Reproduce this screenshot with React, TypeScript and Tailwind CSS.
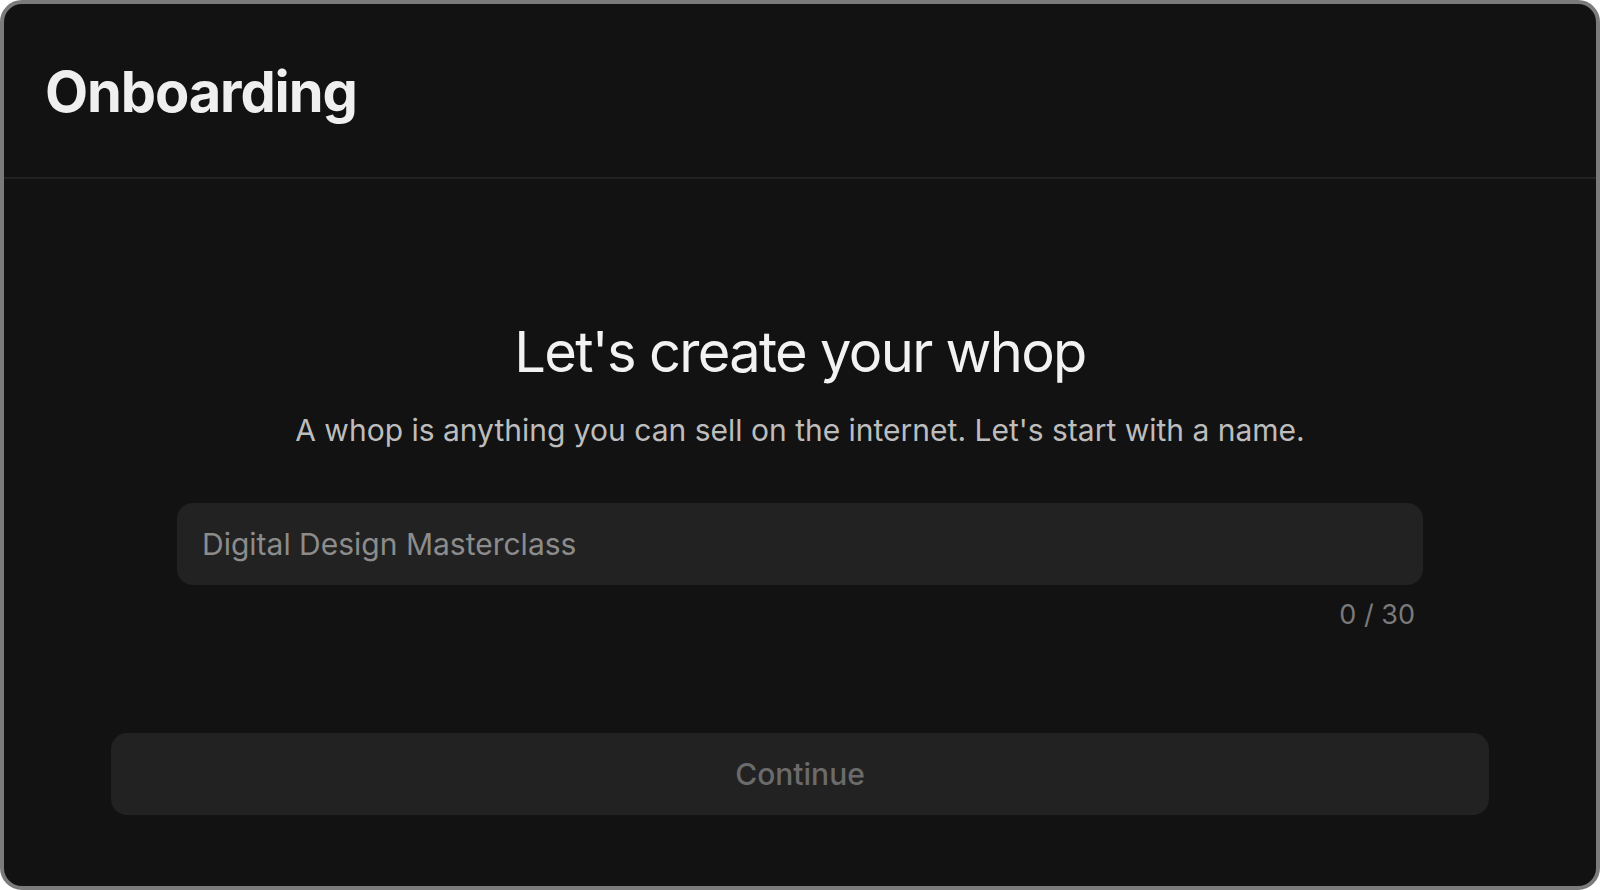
import React from "react";

const font = { fontFamily: 'Inter, "Noto Sans", sans-serif' };

const App = () => {
  return (
    <div className="w-[1600px] h-[890px] bg-white" style={font}>
      <div className="flex h-full flex-col overflow-hidden rounded-[22px] border-4 border-[#7b7b7b] bg-[#121212]">
        {/* Header */}
        <div className="flex h-[175px] shrink-0 items-center border-b-2 border-[#222222] px-[41px]">
          <h1 className="mt-[3px] text-[56px] font-bold leading-none tracking-[-0.02em] text-[#efefef]">
            Onboarding
          </h1>
        </div>

        {/* Body */}
        <div className="flex flex-col items-center pt-[145px]">
          <h2 className="text-[56px] font-normal leading-none tracking-[-0.03em] text-[#f2f2f2]">
            Let's create your whop
          </h2>
          <p className="mt-[35px] text-[30px] leading-none text-[#bdbdbd]">
            A whop is anything you can sell on the internet. Let's start with a name.
          </p>

          <div className="mt-[58px] w-[1246px]">
            <input
              type="text"
              placeholder="Digital Design Masterclass"
              className="h-[82px] w-full rounded-[16px] bg-[#222222] px-[25px] text-[30px] text-[#e5e5e5] outline-none placeholder:text-[#8c8c8c]"
            />
            <div className="mt-[16px] flex justify-end pr-[8px] text-[27px] leading-none text-[#7a7a7a]">
              0 / 30
            </div>
          </div>

          <button className="mt-[105px] flex h-[82px] w-[1378px] items-center justify-center rounded-[16px] bg-[#222222] text-[30px] font-medium text-[#6b6b6b]">
            Continue
          </button>
        </div>
      </div>
    </div>
  );
};

export default App;
